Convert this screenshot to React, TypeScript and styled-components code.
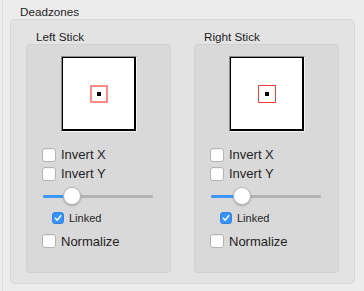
import React, { useState } from "react";
import styled, { createGlobalStyle } from "styled-components";

const GlobalStyle = createGlobalStyle`
  html, body {
    margin: 0;
    padding: 0;
    background: #ececec;
  }
  body {
    font-family: "Liberation Sans", Arial, sans-serif;
    color: #1e1e1e;
  }
`;

const Page = styled.div`
  width: 364px;
  height: 291px;
  box-sizing: border-box;
  padding: 0 9px 0 2px;
`;

const Frame = styled.div`
  height: 100%;
  box-sizing: border-box;
  border-left: 1px solid #dcdcdc;
  padding: 5px 0 0 7px;
`;

const Legend = styled.div`
  padding-left: 10px;
  font-size: 11.7px;
  line-height: 14px;
  height: 14px;
`;

const Group = styled.div`
  border: 1px solid #d7d7d7;
  border-radius: 5px;
  background: #e3e3e3;
  padding: 10px 15px;
  display: grid;
  grid-template-columns: 145px 145px;
  column-gap: 23px;
`;

const Column = styled.div`
  display: flex;
  flex-direction: column;
`;

const StickTitle = styled.div`
  padding-left: 10px;
  font-size: 11.7px;
  line-height: 14px;
  height: 14px;
`;

const Panel = styled.div`
  height: 229px;
  box-sizing: border-box;
  border: 1px solid #d1d1d1;
  border-radius: 4px;
  background: #d9d9d9;
  padding: 11px 15px 0;
  display: flex;
  flex-direction: column;
`;

const Zone = styled.div`
  width: 76px;
  height: 76px;
  box-sizing: border-box;
  margin: 0 auto;
  background: #fff;
  border-top: 1px solid #8d8d8d;
  border-left: 1px solid #8d8d8d;
  border-right: 1px solid #f4f4f4;
  border-bottom: 1px solid #f4f4f4;
  box-shadow: inset 1px 1px 0 #000, inset -2px -2px 0 #000;
  display: flex;
  align-items: center;
  justify-content: center;
`;

const DeadBox = styled.div<{ $color: string; $width: number }>`
  width: 18px;
  height: 18px;
  box-sizing: border-box;
  border: ${({ $width }) => $width}px solid ${({ $color }) => $color};
  display: flex;
  align-items: center;
  justify-content: center;
`;

const Dot = styled.div`
  width: 4px;
  height: 4px;
  background: #000;
`;

const Row = styled.label<{ $indent?: number; $height?: number; $top?: number }>`
  display: flex;
  align-items: center;
  gap: 5px;
  height: ${({ $height }) => $height ?? 19}px;
  margin-top: ${({ $top }) => $top ?? 0}px;
  padding-left: ${({ $indent }) => $indent ?? 0}px;
  font-size: 13px;
`;

const SmallText = styled.span`
  font-size: 11px;
`;

const Box = styled.span<{ $checked?: boolean; $size: number }>`
  width: ${({ $size }) => $size}px;
  height: ${({ $size }) => $size}px;
  box-sizing: border-box;
  border-radius: 3px;
  flex: none;
  display: flex;
  align-items: center;
  justify-content: center;
  background: ${({ $checked }) => ($checked ? "#3a93f6" : "#fff")};
  border: 1px solid ${({ $checked }) => ($checked ? "#2f84e8" : "#b4b4b4")};
  box-shadow: ${({ $checked }) =>
    $checked ? "none" : "inset 0 1px 1px rgba(0,0,0,0.06)"};
`;

const SliderWrap = styled.div`
  height: 22px;
  margin-top: 2px;
  display: flex;
  align-items: center;
`;

const Track = styled.div`
  position: relative;
  width: 110px;
  height: 3px;
  margin-left: 1px;
  border-radius: 2px;
  background: #b2b2b2;
`;

const Fill = styled.div`
  height: 100%;
  border-radius: 2px;
  background: #3b98fa;
`;

const Thumb = styled.div`
  position: absolute;
  top: 50%;
  width: 18px;
  height: 18px;
  margin: -9px 0 0 -9px;
  box-sizing: border-box;
  border-radius: 50%;
  background: #fff;
  border: 0.5px solid #b8b8b8;
  box-shadow: 0 1px 2px rgba(0, 0, 0, 0.25);
`;

function CheckBox({ checked, size }: { checked?: boolean; size: number }) {
  return (
    <Box $checked={checked} $size={size}>
      {checked && (
        <svg width="8" height="8" viewBox="0 0 8 8">
          <polyline
            points="1.3,4.3 3.2,6.2 6.8,1.6"
            fill="none"
            stroke="#fff"
            strokeWidth="1.5"
            strokeLinecap="round"
            strokeLinejoin="round"
          />
        </svg>
      )}
    </Box>
  );
}

function Slider({ value }: { value: number }) {
  const pct = `${value * 100}%`;
  return (
    <SliderWrap>
      <Track>
        <Fill style={{ width: pct }} />
        <Thumb style={{ left: pct }} />
      </Track>
    </SliderWrap>
  );
}

type Stick = {
  name: string;
  color: string;
  width: number;
  value: number;
};

const sticks: Stick[] = [
  { name: "Left Stick", color: "#ff8a8a", width: 2, value: 0.265 },
  { name: "Right Stick", color: "#f5413a", width: 1, value: 0.28 },
];

function StickPanel({ stick }: { stick: Stick }) {
  const [linked] = useState(true);
  return (
    <Column>
      <StickTitle>{stick.name}</StickTitle>
      <Panel>
        <Zone>
          <DeadBox $color={stick.color} $width={stick.width}>
            <Dot />
          </DeadBox>
        </Zone>
        <Row $top={13}>
          <CheckBox size={14} />
          Invert X
        </Row>
        <Row>
          <CheckBox size={14} />
          Invert Y
        </Row>
        <Slider value={stick.value} />
        <Row $indent={10} $height={22}>
          <CheckBox size={12} checked={linked} />
          <SmallText>Linked</SmallText>
        </Row>
        <Row $top={2} $height={20}>
          <CheckBox size={14} />
          Normalize
        </Row>
      </Panel>
    </Column>
  );
}

export default function App() {
  return (
    <Page>
      <GlobalStyle />
      <Frame>
        <Legend>Deadzones</Legend>
        <Group>
          {sticks.map((s) => (
            <StickPanel key={s.name} stick={s} />
          ))}
        </Group>
      </Frame>
    </Page>
  );
}
